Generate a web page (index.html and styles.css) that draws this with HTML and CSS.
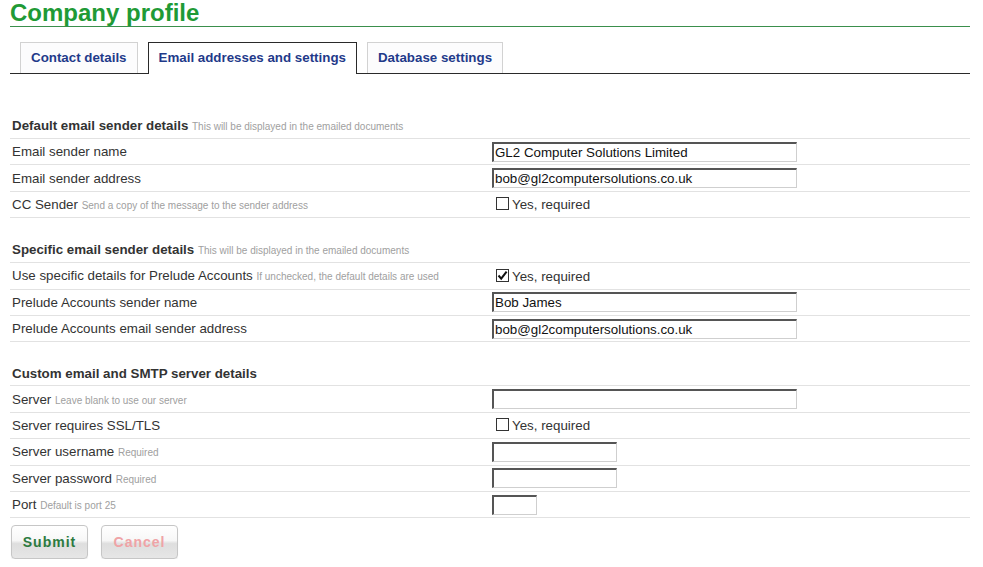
FILE: index.html
```html
<!DOCTYPE html>
<html lang="en">
<head>
<meta charset="utf-8">
<title>Company profile</title>
<link rel="stylesheet" href="styles.css">
</head>
<body>
<div class="page">
  <h1 class="title">Company profile</h1>
  <div class="tabs">
    <div class="tab">Contact details</div>
    <div class="tab active">Email addresses and settings</div>
    <div class="tab">Database settings</div>
  </div>

  <form class="form">
    <section class="section first">
      <div class="section-head">Default email sender details <span class="hint">This will be displayed in the emailed documents</span></div>
      <div class="row"><div class="label">Email sender name</div><div class="field"><input class="text long" type="text" value="GL2 Computer Solutions Limited"></div></div>
      <div class="row"><div class="label">Email sender address</div><div class="field"><input class="text long" type="text" value="bob@gl2computersolutions.co.uk"></div></div>
      <div class="row last"><div class="label">CC Sender <span class="hint">Send a copy of the message to the sender address</span></div><div class="field"><span class="check"><span class="box"></span>Yes, required</span></div></div>
    </section>

    <section class="section">
      <div class="section-head">Specific email sender details <span class="hint">This will be displayed in the emailed documents</span></div>
      <div class="row"><div class="label">Use specific details for Prelude Accounts <span class="hint">If unchecked, the default details are used</span></div><div class="field"><span class="check"><span class="box"><svg width="11" height="11" viewBox="0 0 11 11"><path d="M1.5 5.5 L4.2 8.6 L9.6 1.6" fill="none" stroke="#111" stroke-width="2"/></svg></span>Yes, required</span></div></div>
      <div class="row"><div class="label">Prelude Accounts sender name</div><div class="field"><input class="text long" type="text" value="Bob James"></div></div>
      <div class="row last"><div class="label">Prelude Accounts email sender address</div><div class="field"><input class="text long" type="text" value="bob@gl2computersolutions.co.uk"></div></div>
    </section>

    <section class="section">
      <div class="section-head">Custom email and SMTP server details</div>
      <div class="row"><div class="label">Server <span class="hint">Leave blank to use our server</span></div><div class="field"><input class="text long" type="text" value=""></div></div>
      <div class="row"><div class="label">Server requires SSL/TLS</div><div class="field"><span class="check"><span class="box"></span>Yes, required</span></div></div>
      <div class="row"><div class="label">Server username <span class="hint">Required</span></div><div class="field"><input class="text medium" type="text" value=""></div></div>
      <div class="row"><div class="label">Server password <span class="hint">Required</span></div><div class="field"><input class="text medium" type="password" value=""></div></div>
      <div class="row last"><div class="label">Port <span class="hint">Default is port 25</span></div><div class="field"><input class="text small" type="text" value=""></div></div>
    </section>

    <div class="buttons">
      <button type="button" class="btn submit">Submit</button>
      <button type="button" class="btn cancel">Cancel</button>
    </div>
  </form>
</div>
</body>
</html>
```
FILE: styles.css
```css
html, body {
  margin: 0;
  padding: 0;
  background: #ffffff;
}
body {
  font-family: "Liberation Sans", Arial, sans-serif;
  font-size: 13.33px;
  color: #333333;
}
.page {
  width: 960px;
  margin-left: 10px;
}
.title {
  margin: 0;
  font-size: 24px;
  line-height: 26px;
  font-weight: bold;
  color: #1f9a36;
  border-bottom: 1px solid #3a8f4c;
}
.tabs {
  display: flex;
  gap: 10px;
  padding-left: 10px;
  margin-top: 15px;
  border-bottom: 1px solid #2a2a2a;
  height: 31px;
}
.tab {
  box-sizing: border-box;
  height: 31px;
  padding: 0 10px 1px;
  display: flex;
  align-items: center;
  border: 1px solid #d2d2d2;
  border-bottom: none;
  background: #fcfcfd;
  color: #1f3a8a;
  font-weight: bold;
  font-size: 13.33px;
}
.tab.active {
  height: 32px;
  padding-bottom: 2px;
  border-color: #2a2a2a;
  background: #ffffff;
  position: relative;
  z-index: 1;
}
.form {
  margin: 0;
}
.section {
  margin-top: 24px;
}
.section.first {
  margin-top: 44px;
}
.section-head {
  line-height: 16px;
  padding: 0 0 3px 2px;
  font-weight: bold;
  color: #333333;
}
.hint {
  font-weight: normal;
  font-size: 10px;
  color: #a0a0a0;
}
.row {
  box-sizing: border-box;
  height: 26.4px;
  display: grid;
  grid-template-columns: 480px 1fr;
  align-items: center;
  padding-left: 2px;
  border-top: 1px solid #e2e2e2;
}
.row.last {
  border-bottom: 1px solid #e2e2e2;
  height: 27.4px;
}
.label {
  color: #333333;
  white-space: nowrap;
}
.field {
  display: flex;
  align-items: center;
}
.text {
  box-sizing: border-box;
  height: 20px;
  margin: 0;
  padding: 0 2px 0 1px;
  font-family: "Liberation Sans", Arial, sans-serif;
  font-size: 13.33px;
  color: #111111;
  background: #ffffff;
  border-style: solid;
  border-width: 2px 1px 1px 2px;
  border-color: #555555 #cfcfcf #cfcfcf #555555;
  outline: none;
}
.text.long { width: 305px; }
.text.medium { width: 125px; }
.text.small { width: 45px; }
.check {
  display: flex;
  align-items: center;
  margin-left: 4px;
  color: #333333;
  padding-top: 1px;
}
.box {
  box-sizing: border-box;
  width: 13px;
  height: 13px;
  border: 1px solid #333333;
  background: #ffffff;
  margin-right: 3px;
  margin-top: -2px;
  display: flex;
  align-items: center;
  justify-content: center;
}
.box svg {
  display: block;
}
.buttons {
  display: flex;
  gap: 13px;
  margin-top: 7px;
  padding-left: 1px;
}
.btn {
  box-sizing: border-box;
  width: 77px;
  height: 34px;
  border: 1px solid #c6c6c6;
  border-radius: 4px;
  background: linear-gradient(to bottom, #ffffff 0%, #f7f7f7 45%, #dedede 55%, #e6e6e6 100%);
  font-family: "Liberation Sans", Arial, sans-serif;
  font-size: 14px;
  font-weight: bold;
  letter-spacing: 1px;
  padding: 0;
  box-shadow: 0 1px 1px rgba(0,0,0,0.08);
}
.btn.submit { color: #2c7a40; }
.btn.cancel { color: #efa3a6; }
```
